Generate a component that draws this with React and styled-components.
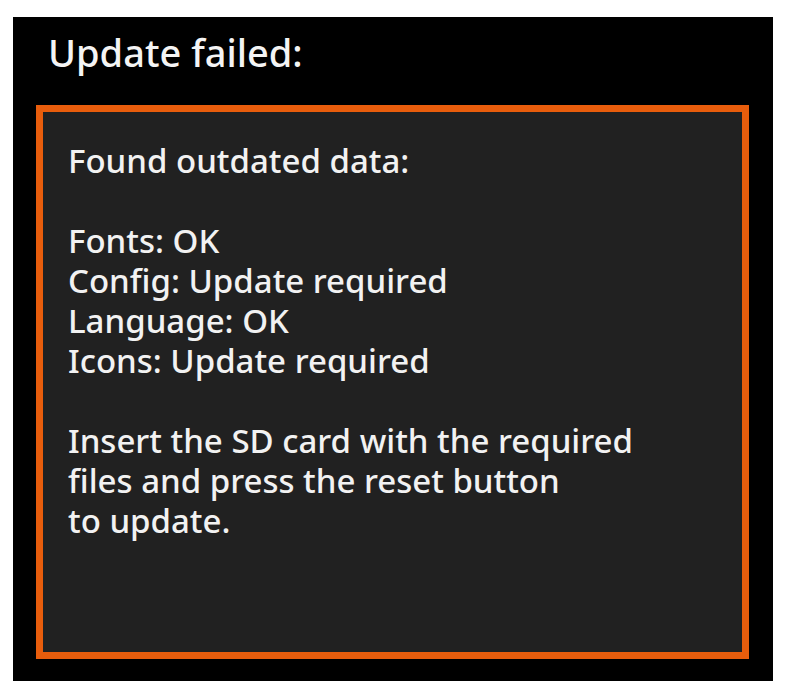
import React from "react";
import styled, { createGlobalStyle } from "styled-components";

const GlobalStyle = createGlobalStyle`
  html, body {
    margin: 0;
    padding: 0;
    background: #ffffff;
  }
  body {
    font-family: "Noto Sans", "Open Sans", sans-serif;
  }
`;

const Page = styled.div`
  padding: 17px 0 0 13px;
`;

const Screen = styled.div`
  width: 760px;
  height: 664px;
  box-sizing: border-box;
  background: #000000;
  padding: 0 24px 22px 23px;
  display: flex;
  flex-direction: column;
`;

const Title = styled.h1`
  margin: 0;
  height: 88px;
  padding: 13px 0 0 12px;
  box-sizing: border-box;
  font-size: 38px;
  line-height: 44px;
  font-weight: 500;
  color: #f4f4f4;
`;

const Message = styled.div`
  flex: 1;
  border: 7px solid #e85d0c;
  background: #212121;
  padding: 29px 24px 20px 25px;
  color: #f2f2f2;
  font-size: 33px;
  line-height: 40px;
  font-weight: 500;
`;

const Line = styled.div`
  height: 40px;
  white-space: nowrap;
`;

const LINES = [
  "Found outdated data:",
  "",
  "Fonts: OK",
  "Config: Update required",
  "Language: OK",
  "Icons: Update required",
  "",
  "Insert the SD card with the required",
  "files and press the reset button",
  "to update."
];

const App = () => (
  <>
    <GlobalStyle />
    <Page>
      <Screen>
        <Title>Update failed:</Title>
        <Message>
          {LINES.map((text, i) => (
            <Line key={i}>{text}</Line>
          ))}
        </Message>
      </Screen>
    </Page>
  </>
);

export default App;
